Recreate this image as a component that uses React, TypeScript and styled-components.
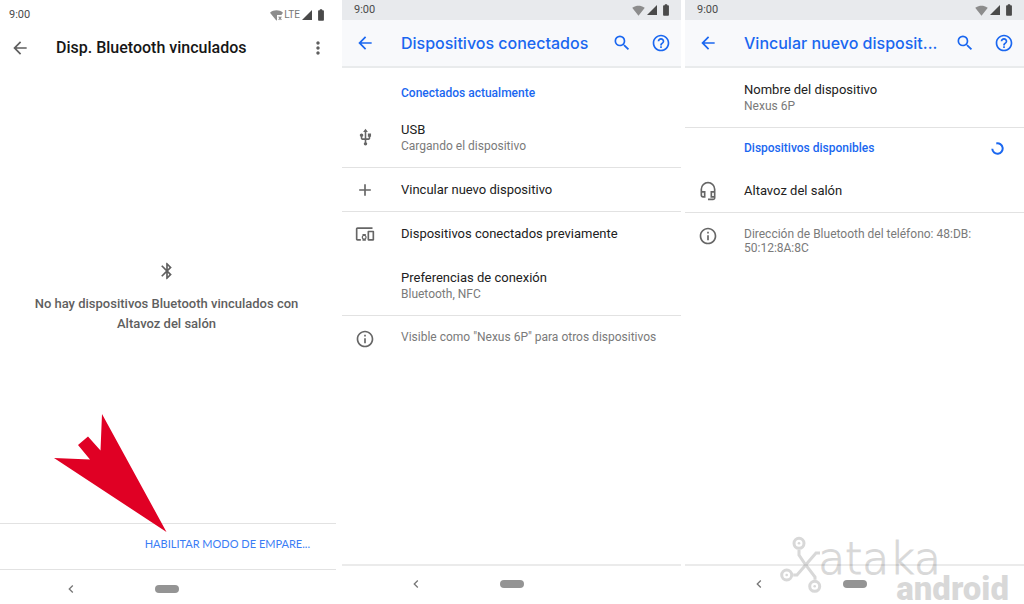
import React from "react";
import styled, { createGlobalStyle } from "styled-components";
import {
  MdAdd,
  MdArrowBack,
  MdBatteryFull,
  MdBluetooth,
  MdChevronLeft,
  MdDevicesOther,
  MdHelpOutline,
  MdMoreVert,
  MdOutlineHeadsetMic,
  MdOutlineInfo,
  MdSearch,
  MdSignalCellular4Bar,
  MdSignalWifi4Bar,
  MdUsb,
} from "react-icons/md";

const BLUE = "#1a67f0";
const LINE = "#e2e2e2";

const GlobalStyle = createGlobalStyle`
  * { box-sizing: border-box; }
  body {
    margin: 0;
    background: #fff;
    color: #212121;
    font-family: Roboto, "Noto Sans", sans-serif;
  }
  h1, h2, p, ul { margin: 0; padding: 0; }
  ul { list-style: none; }
  button { font: inherit; color: inherit; background: none; border: 0; padding: 0; cursor: pointer; }
  svg { display: block; flex: none; }
`;

const Page = styled.div`
  position: relative;
  display: flex;
  min-height: 100vh;
`;

const Screen = styled.section<{ $grow: number; $gap?: number }>`
  flex: ${(p) => p.$grow} 1 0;
  min-width: 0;
  margin-left: ${(p) => p.$gap ?? 0}px;
  display: flex;
  flex-direction: column;
`;

const StatusBar = styled.div<{ $tinted?: boolean }>`
  display: flex;
  align-items: center;
  height: ${(p) => (p.$tinted ? 20 : 30)}px;
  padding: 0 8px 0 ${(p) => (p.$tinted ? 12 : 9)}px;
  background: ${(p) => (p.$tinted ? "#e8eaed" : "transparent")};
  color: #4a4a4a;
  font-size: 11px;
  line-height: 14px;
`;

const StatusIcons = styled.div`
  margin-left: auto;
  display: flex;
  align-items: center;
  gap: 1px;
`;

const Faded = styled.span`
  color: #8c8c8c;
`;

const Network = styled.span`
  color: #777;
  font-size: 10px;
`;

const Toolbar = styled.header<{ $tinted?: boolean }>`
  display: flex;
  align-items: center;
  gap: 26px;
  height: ${(p) => (p.$tinted ? 48 : 36)}px;
  padding: 0 ${(p) => (p.$tinted ? "10px 0 13px" : "8px 0 10px")};
  background: ${(p) => (p.$tinted ? "#f8f9fb" : "transparent")};
  border-bottom: ${(p) => (p.$tinted ? "2px solid #e9ebec" : "0")};
  color: ${(p) => (p.$tinted ? BLUE : "#5f5f5f")};
`;

const Title = styled.h1<{ $google?: boolean }>`
  flex: 1;
  min-width: 0;
  white-space: nowrap;
  color: ${(p) => (p.$google ? BLUE : "#161616")};
  font-family: ${(p) => (p.$google ? "Inter" : "Roboto")}, sans-serif;
  font-size: 16px;
  line-height: 20px;
  font-weight: 500;
`;

const Actions = styled.div`
  display: flex;
  gap: 19px;
`;

const IconButton = styled.button`
  display: block;
`;

const Content = styled.main`
  flex: 1;
`;

const SectionTitle = styled.h2<{ $first?: boolean }>`
  display: flex;
  align-items: center;
  justify-content: space-between;
  padding: ${(p) => (p.$first ? "16px 20px 6px 59px" : "11px 20px 12px 59px")};
  color: ${BLUE};
  font-size: 12px;
  line-height: 18px;
  font-weight: 500;
`;

const Row = styled.button<{ $divided?: boolean; $tall?: boolean }>`
  display: flex;
  align-items: center;
  gap: 26px;
  width: 100%;
  min-height: ${(p) => (p.$tall ? 60 : 44)}px;
  padding: 0 13px;
  text-align: left;
  border-bottom: ${(p) => (p.$divided ? `1px solid ${LINE}` : "0")};
`;

const IconSlot = styled.span`
  display: flex;
  justify-content: center;
  flex: none;
  width: 20px;
  color: #666;
`;

const RowTitle = styled.span`
  display: block;
  font-size: 13px;
  line-height: 16px;
`;

const RowNote = styled.span`
  display: block;
  color: #7a7a7a;
  font-size: 12px;
  line-height: 17px;
`;

const RowText = styled.span<{ $tall?: boolean }>`
  padding-top: ${(p) => (p.$tall ? 2 : 0)}px;
`;

const Info = styled.div`
  display: flex;
  gap: 26px;
  padding: 13px;
`;

const InfoText = styled.p`
  padding-top: 1px;
  color: #7a7a7a;
  font-size: 12px;
  line-height: 14px;
`;

const Empty = styled.main`
  flex: 1;
  display: flex;
  flex-direction: column;
  align-items: center;
  justify-content: center;
  gap: 13px;
  padding: 6px 27px 0 24px;
  color: #5f5f5f;
  text-align: center;
  font-size: 13px;
  line-height: 20px;
  font-weight: 500;
`;

const ActionBar = styled.footer`
  position: relative;
  display: flex;
  justify-content: flex-end;
  align-items: center;
  height: 46px;
  padding: 0 26px 5px;
  border-top: 1px solid ${LINE};
`;

const TextButton = styled.button`
  && {
    color: #3b7df5;
    font-family: Lato, sans-serif;
    font-size: 11px;
    line-height: 16px;
  }
`;

const Pointer = styled.svg`
  position: absolute;
  left: 54px;
  top: -110px;
`;

const NavBar = styled.nav<{ $tinted?: boolean }>`
  display: flex;
  justify-content: center;
  align-items: center;
  gap: 76px;
  height: ${(p) => (p.$tinted ? 40 : 35)}px;
  padding: ${(p) => (p.$tinted ? "0 92px 2px 0" : "4px 95px 0 0")};
  border-top: ${(p) => (p.$tinted ? "2px solid #ebebeb" : `1px solid ${LINE}`)};
  color: #777;
`;

const HomePill = styled.button`
  && {
    width: 24px;
    height: 8px;
    border-radius: 4px;
    background: #949494;
  }
`;

const Watermark = styled.div`
  position: absolute;
  right: 15px;
  bottom: 1px;
  display: flex;
  flex-direction: column;
  align-items: flex-end;
  color: #000;
  opacity: 0.15;
  pointer-events: none;
`;

const BrandLine = styled.div`
  display: flex;
  align-items: flex-start;
  height: 39px;
  padding-right: 68px;
`;

const BrandMark = styled.svg`
  margin-right: -4px;
`;

const BrandName = styled.span`
  font-family: "DejaVu Sans", sans-serif;
  font-weight: 200;
  font-size: 44px;
  line-height: 46px;
  -webkit-text-stroke: 1px currentColor;
`;

const BrandSub = styled.span`
  font-family: Roboto, sans-serif;
  font-weight: 900;
  font-size: 33px;
  line-height: 28px;
`;

function Status({ tinted }: { tinted?: boolean }) {
  return (
    <StatusBar $tinted={tinted}>
      <span>9:00</span>
      <StatusIcons>
        <Faded>
          {tinted ? (
            <MdSignalWifi4Bar size={13} />
          ) : (
            <svg width="13" height="13" viewBox="0 0 24 24" fill="currentColor">
              <path d="M0 7C7 1 17 1 24 7l-3 4h-8v9l-1 1.500z" />
              <path d="M16 14l5 6m0-6l-5 6" stroke="currentColor" strokeWidth="2" />
            </svg>
          )}
        </Faded>
        {!tinted && <Network>LTE</Network>}
        <MdSignalCellular4Bar size={12} />
        <MdBatteryFull size={14} />
      </StatusIcons>
    </StatusBar>
  );
}

function SettingsHeader({ title }: { title: string }) {
  return (
    <Toolbar $tinted>
      <IconButton aria-label="Atrás"><MdArrowBack size={20} /></IconButton>
      <Title $google>{title}</Title>
      <Actions>
        <IconButton aria-label="Buscar"><MdSearch size={20} /></IconButton>
        <IconButton aria-label="Ayuda"><MdHelpOutline size={20} /></IconButton>
      </Actions>
    </Toolbar>
  );
}

function Navigation({ tinted }: { tinted?: boolean }) {
  return (
    <NavBar $tinted={tinted}>
      <IconButton aria-label="Volver"><MdChevronLeft size={16} /></IconButton>
      <HomePill aria-label="Inicio" />
    </NavBar>
  );
}

type ItemProps = {
  icon?: React.ReactNode;
  title: string;
  note?: string;
  divided?: boolean;
};

function Item({ icon, title, note, divided }: ItemProps) {
  return (
    <li>
      <Row $divided={divided} $tall={!!note}>
        <IconSlot>{icon}</IconSlot>
        <RowText $tall={!!note}>
          <RowTitle>{title}</RowTitle>
          {note && <RowNote>{note}</RowNote>}
        </RowText>
      </Row>
    </li>
  );
}

function InfoNote({ children }: { children: React.ReactNode }) {
  return (
    <Info>
      <IconSlot><MdOutlineInfo size={20} /></IconSlot>
      <InfoText>{children}</InfoText>
    </Info>
  );
}

export default function App() {
  return (
    <>
      <GlobalStyle />
      <Page>
        <Screen $grow={336}>
          <Status />
          <Toolbar>
            <IconButton aria-label="Atrás"><MdArrowBack size={20} /></IconButton>
            <Title>Disp. Bluetooth vinculados</Title>
            <IconButton aria-label="Más opciones"><MdMoreVert size={20} /></IconButton>
          </Toolbar>
          <Empty>
            <MdBluetooth size={20} />
            <p>No hay dispositivos Bluetooth vinculados con Altavoz del salón</p>
          </Empty>
          <ActionBar>
            <TextButton>HABILITAR MODO DE EMPARE...</TextButton>
            <Pointer width="113" height="118" viewBox="0 0 113 118" aria-hidden="true">
              <path d="M48 0L112.500 118L0 44L36 45.500L24 31L34 22.500L46.500 36.500z" fill="#e00024" />
            </Pointer>
          </ActionBar>
          <Navigation />
        </Screen>

        <Screen $grow={339} $gap={6}>
          <Status tinted />
          <SettingsHeader title="Dispositivos conectados" />
          <Content>
            <SectionTitle $first>Conectados actualmente</SectionTitle>
            <ul>
              <Item icon={<MdUsb size={19} />} title="USB" note="Cargando el dispositivo" divided />
              <Item icon={<MdAdd size={20} />} title="Vincular nuevo dispositivo" divided />
              <Item icon={<MdDevicesOther size={20} />} title="Dispositivos conectados previamente" />
              <Item title="Preferencias de conexión" note="Bluetooth, NFC" divided />
            </ul>
            <InfoNote>Visible como "Nexus 6P" para otros dispositivos</InfoNote>
          </Content>
          <Navigation tinted />
        </Screen>

        <Screen $grow={339} $gap={4}>
          <Status tinted />
          <SettingsHeader title="Vincular nuevo disposit..." />
          <Content>
            <ul>
              <Item title="Nombre del dispositivo" note="Nexus 6P" divided />
            </ul>
            <SectionTitle>
              Dispositivos disponibles
              <svg width="13" height="13" viewBox="0 0 13 13" fill="none" stroke={BLUE} strokeWidth="2" aria-hidden="true">
                <path d="M6 1.300A5.200 5.200 0 1 1 1.300 6" transform="rotate(-8 6.500 6.500)" />
              </svg>
            </SectionTitle>
            <ul>
              <Item icon={<MdOutlineHeadsetMic size={20} />} title="Altavoz del salón" divided />
            </ul>
            <InfoNote>
              Dirección de Bluetooth del teléfono: 48:DB:
              <br />
              50:12:8A:8C
            </InfoNote>
          </Content>
          <Navigation tinted />
        </Screen>

        <Watermark>
          <BrandLine>
            <BrandMark width="44" height="58" viewBox="0 0 44 58" fill="none" stroke="currentColor" strokeWidth="3" aria-hidden="true">
              <circle cx="21" cy="7.300" r="5" />
              <circle cx="8.700" cy="39" r="5" />
              <circle cx="36.700" cy="50.300" r="5" />
              <path d="M21 13.800v5.200l6 9 10 13v2.800M15.200 39h3.800l19-22h4" />
              <g fill="currentColor" stroke="none">
                <circle cx="21" cy="7.300" r="1.300" />
                <circle cx="8.700" cy="39" r="1.300" />
                <circle cx="36.700" cy="50.300" r="1.300" />
              </g>
            </BrandMark>
            <BrandName>ataka</BrandName>
          </BrandLine>
          <BrandSub>android</BrandSub>
        </Watermark>
      </Page>
    </>
  );
}
